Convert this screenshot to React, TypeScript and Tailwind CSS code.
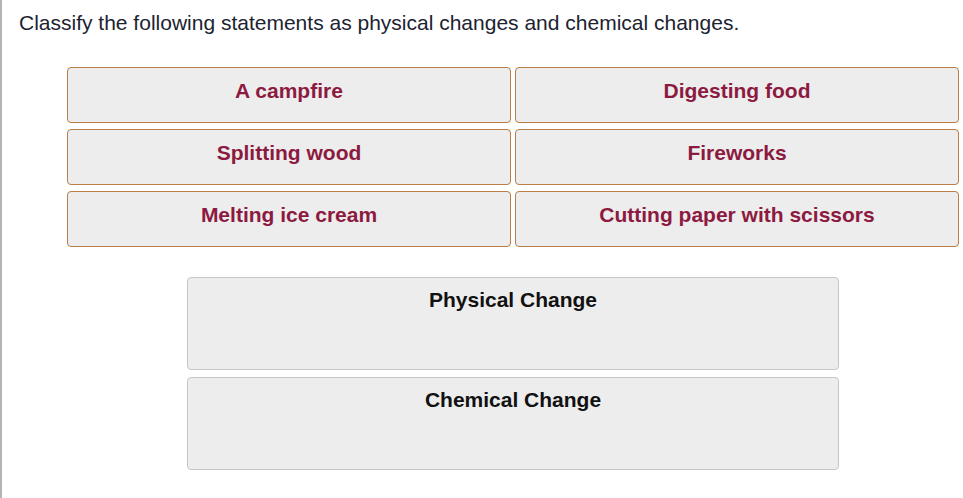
// Sorting exercise: drag statements into physical / chemical change bins

const statements: string[] = [
  "A campfire",
  "Digesting food",
  "Splitting wood",
  "Fireworks",
  "Melting ice cream",
  "Cutting paper with scissors",
];

const bins: string[] = ["Physical Change", "Chemical Change"];

const App = () => {
  return (
    <div
      className="min-h-[498px] w-[963px] border-l-2 border-[#b4b4b4] bg-white"
      style={{ fontFamily: '"Liberation Sans", Arial, sans-serif' }}
    >
      <p className="pl-[17px] pt-[10px] text-[21px] leading-[25px] text-[#1c2330]">
        Classify the following statements as physical changes and chemical changes.
      </p>

      <div className="ml-[65px] mt-[32px] w-[892px]">
        {/* statement tiles */}
        <div className="grid grid-cols-2 gap-x-[4px] gap-y-[6px]">
          {statements.map((text, index) => (
            <div
              key={index}
              className="h-[56px] rounded-[4px] border border-[#b97d45] bg-[#ededed] pt-[11px] text-center text-[21px] font-bold leading-[24px] text-[#8c1a40]"
            >
              {text}
            </div>
          ))}
        </div>

        {/* drop targets */}
        <div className="mx-auto mt-[30px] flex w-[652px] flex-col gap-[7px]">
          {bins.map((label, index) => (
            <div
              key={index}
              className="h-[93px] rounded-[4px] border border-[#c6c6c6] bg-[#ededed] pt-[10px] text-center text-[21px] font-bold leading-[24px] text-[#111111]"
            >
              {label}
            </div>
          ))}
        </div>
      </div>
    </div>
  );
};

export default App;
